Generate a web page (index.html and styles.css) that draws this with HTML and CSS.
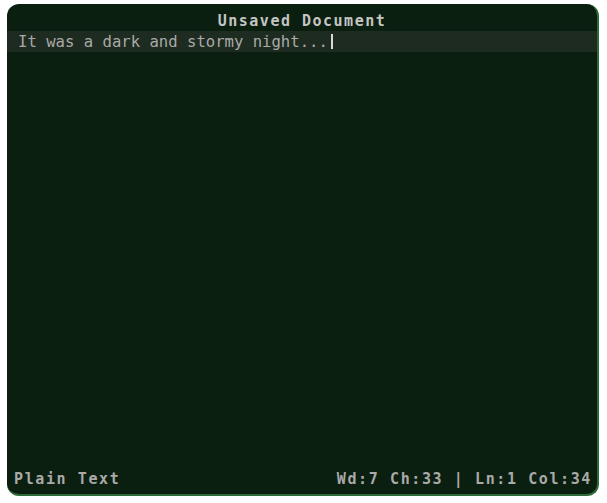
FILE: index.html
```html
<!DOCTYPE html>
<html lang="en">
<head>
    <meta charset="UTF-8">
    <meta name="viewport" content="width=device-width, initial-scale=1.0">
    <title>Unsaved Document</title>
    <link rel="stylesheet" href="styles.css">
</head>
<body>
    <div class="editor">
        <div class="title">Unsaved Document</div>
        <div class="lines">
            <div class="line current">It was a dark and stormy night...<span class="cursor"></span></div>
        </div>
        <div class="status">
            <span class="mode">Plain Text</span>
            <span class="counts">Wd:7 Ch:33 | Ln:1 Col:34</span>
        </div>
    </div>
</body>
</html>
```

FILE: styles.css
```css
:root{
    --back: #0b1f11;
    --linecolor: #1e2b20;
    --textcolor: #a9aaa8;
    --titlecolor: #c4c5c3;
    --edge: #2d6a38;
}
html,body{
    margin: 0;
    padding: 0;
    background: #ffffff;
}
body {
    padding: 4px 0 0 7px;
    font-family: "DejaVu Sans Mono", "Liberation Mono", monospace;
}
.editor {
    width: 592px;
    height: 492px;
    box-sizing: border-box;
    background: var(--back);
    border-radius: 12px;
    border-right: 2px solid var(--edge);
    border-bottom: 2px solid var(--edge);
    display: flex;
    flex-direction: column;
    overflow: hidden;
}
.title {
    height: 27px;
    line-height: 35px;
    text-align: center;
    color: var(--titlecolor);
    font-size: 15px;
    font-weight: bold;
    letter-spacing: 1.5px;
}
.lines {
    flex: 1;
}
.line {
    height: 21px;
    line-height: 22px;
    padding-left: 11px;
    color: var(--textcolor);
    font-size: 15.6px;
    white-space: pre;
}
.line.current {
    background: var(--linecolor);
}
.cursor {
    display: inline-block;
    width: 2px;
    height: 15px;
    margin-left: 3px;
    vertical-align: -2px;
    background: #d8d8d8;
}
.status {
    height: 30px;
    padding: 2px 5px 0 7px;
    display: flex;
    justify-content: space-between;
    align-items: center;
    color: var(--textcolor);
    font-size: 15px;
    font-weight: bold;
    letter-spacing: 1.6px;
}
```
